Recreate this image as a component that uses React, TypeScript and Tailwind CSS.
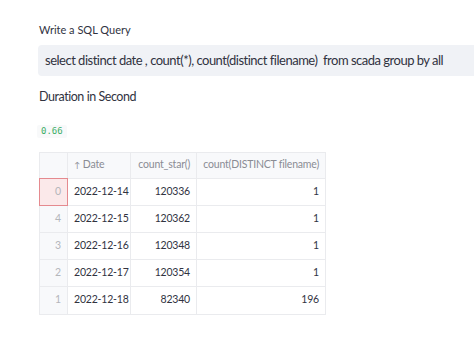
import React from "react";

const rows = [
  { i: "0", date: "2022-12-14", cnt: "120336", files: "1" },
  { i: "4", date: "2022-12-15", cnt: "120362", files: "1" },
  { i: "3", date: "2022-12-16", cnt: "120348", files: "1" },
  { i: "2", date: "2022-12-17", cnt: "120354", files: "1" },
  { i: "1", date: "2022-12-18", cnt: "82340", files: "196" },
];

const App = () => {
  return (
    <div
      className="w-[474px] h-[351px] bg-white overflow-hidden text-[#31333f]"
      style={{ fontFamily: "Lato, 'Noto Sans', sans-serif" }}
    >
      <div className="pl-[39px] pt-[22px]">
        <p className="text-[11px] leading-[16px] h-[16px]">Write a SQL Query</p>
        <div className="mt-[7px] -ml-[1px] w-[440px] h-[31px] bg-[#f0f2f6] rounded-l-[4px] flex items-center pl-[7px]">
          <span className="text-[13px] tracking-[-0.5px] whitespace-pre">
            select distinct date , count(*), count(distinct filename)  from scada group by all
          </span>
        </div>
        <p className="mt-[11px] text-[12.5px] tracking-[-0.45px] leading-[20px]">Duration in Second</p>
        <div className="mt-[18px] -ml-[2px] inline-flex h-[13px] items-center px-[4px] bg-[#f8f9fa] rounded-[2px]">
          <span
            className="text-[9px] text-[#3dae66]"
            style={{ fontFamily: "'DejaVu Sans Mono', monospace" }}
          >
            0.66
          </span>
        </div>
        <div className="mt-[12px] w-[287px] border border-[#eaebee] text-[10.5px] tracking-[-0.2px] whitespace-nowrap">
          <div className="flex h-[26px] bg-[#f8f9fb] text-[#8a8c94] border-b border-[#eaebee]">
            <div className="w-[28px] border-r border-[#eaebee]" />
            <div className="w-[63px] border-r border-[#eaebee] flex items-center pl-[6px]">
              <span className="text-[8px] mr-[3px]">↑</span>Date
            </div>
            <div className="w-[66px] border-r border-[#eaebee] flex items-center justify-end pr-[6px]">
              count_star()
            </div>
            <div className="flex-1 flex items-center justify-end pr-[6px]">count(DISTINCT filename)</div>
          </div>
          {rows.map((r, idx) => (
            <div
              key={r.i}
              className={`flex h-[27px] ${idx < rows.length - 1 ? "border-b border-[#eaebee]" : ""}`}
            >
              {idx === 0 ? (
                <div className="w-[29px] h-[28px] -ml-px -mt-px flex items-center justify-end pr-[6px] text-[#b4b6bb] bg-[#fbe9ea] border border-[#e58a8f]">
                  {r.i}
                </div>
              ) : (
                <div className="w-[28px] flex items-center justify-end pr-[6px] text-[#b4b6bb] bg-[#f8f9fb] border-r border-[#eaebee]">
                  {r.i}
                </div>
              )}
              <div className="w-[63px] border-r border-[#eaebee] flex items-center pl-[6px]">{r.date}</div>
              <div className="w-[66px] border-r border-[#eaebee] flex items-center justify-end pr-[6px]">
                {r.cnt}
              </div>
              <div className="flex-1 flex items-center justify-end pr-[6px]">{r.files}</div>
            </div>
          ))}
        </div>
      </div>
    </div>
  );
};

export default App;
